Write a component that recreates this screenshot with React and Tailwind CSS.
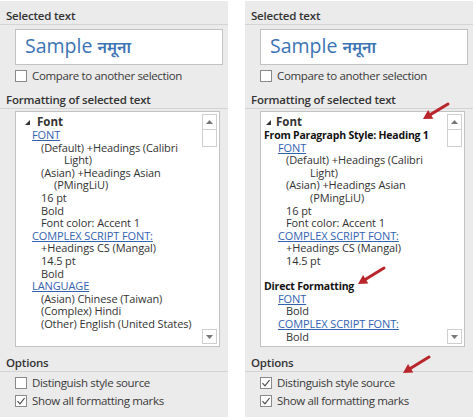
import React from 'react';

const ui = { fontFamily: '"Open Sans", "Noto Sans", "Noto Sans Devanagari", "DejaVu Sans", sans-serif' };

// tree rows: k = kind (head | bold | link | text | blank), x = left offset in box
const leftRows = [
  { k: 'head', t: 'Font' },
  { k: 'link', t: 'FONT', x: 16 },
  { k: 'text', t: '(Default) +Headings (Calibri', x: 25 },
  { k: 'text', t: 'Light)', x: 48 },
  { k: 'text', t: '(Asian) +Headings Asian', x: 25 },
  { k: 'text', t: '(PMingLiU)', x: 38 },
  { k: 'text', t: '16 pt', x: 25 },
  { k: 'text', t: 'Bold', x: 25 },
  { k: 'text', t: 'Font color: Accent 1', x: 25 },
  { k: 'link', t: 'COMPLEX SCRIPT FONT:', x: 16 },
  { k: 'text', t: '+Headings CS (Mangal)', x: 25 },
  { k: 'text', t: '14.5 pt', x: 25 },
  { k: 'text', t: 'Bold', x: 25 },
  { k: 'link', t: 'LANGUAGE', x: 16 },
  { k: 'text', t: '(Asian) Chinese (Taiwan)', x: 25 },
  { k: 'text', t: '(Complex) Hindi', x: 25 },
  { k: 'text', t: '(Other) English (United States)', x: 25 },
];

const rightRows = [
  { k: 'head', t: 'Font' },
  { k: 'bold', t: 'From Paragraph Style: Heading 1', x: 3 },
  { k: 'link', t: 'FONT', x: 17 },
  { k: 'text', t: '(Default) +Headings (Calibri', x: 25 },
  { k: 'text', t: 'Light)', x: 49 },
  { k: 'text', t: '(Asian) +Headings Asian', x: 25 },
  { k: 'text', t: '(PMingLiU)', x: 49 },
  { k: 'text', t: '16 pt', x: 25 },
  { k: 'text', t: 'Font color: Accent 1', x: 25 },
  { k: 'link', t: 'COMPLEX SCRIPT FONT:', x: 17 },
  { k: 'text', t: '+Headings CS (Mangal)', x: 25 },
  { k: 'text', t: '14.5 pt', x: 25 },
  { k: 'blank', t: '' },
  { k: 'bold', t: 'Direct Formatting', x: 3 },
  { k: 'link', t: 'FONT', x: 17 },
  { k: 'text', t: 'Bold', x: 25 },
  { k: 'link', t: 'COMPLEX SCRIPT FONT:', x: 17 },
  { k: 'text', t: 'Bold', x: 25 },
];

function Heading({ children }) {
  return (
    <div className="pl-[6px] border-b border-[#d4d4d4] text-[11.5px] leading-[17px] font-semibold tracking-[-0.2px] text-[#333]">
      {children}
    </div>
  );
}

function Check({ checked, label }) {
  return (
    <div className="flex items-center gap-[5px] pl-[15px] h-[18px]">
      <div className="w-[12px] h-[12px] bg-white border border-[#8a8a8a] flex items-center justify-center">
        {checked && (
          <svg width="10" height="10" viewBox="0 0 10 10">
            <path d="M1.5 5.2 L4 7.8 L8.6 2" fill="none" stroke="#4a4a4a" strokeWidth="1.2" />
          </svg>
        )}
      </div>
      <span className="text-[11.5px] leading-[14px] text-[#3a3a3a] tracking-[-0.35px]">{label}</span>
    </div>
  );
}

function Triangle() {
  return (
    <svg width="5" height="5" viewBox="0 0 5 5" className="inline-block">
      <path d="M5 0 L5 5 L0 5 Z" fill="#333" />
    </svg>
  );
}

function Tree({ rows, headPad, headGap }) {
  return (
    <div className="flex-1 pt-[4px] text-[11px] leading-[12.6px] tracking-[-0.1px] text-[#333]">
      {rows.map((r, i) => {
        if (r.k === 'head')
          return (
            <div key={i} className="flex items-center h-[13px]" style={{ paddingLeft: headPad }}>
              <Triangle />
              <span className="font-bold text-[11.5px] tracking-normal" style={{ marginLeft: headGap }}>{r.t}</span>
            </div>
          );
        if (r.k === 'blank') return <div key={i} className="h-[12.6px]" />;
        return (
          <div
            key={i}
            className={
              r.k === 'link'
                ? 'whitespace-nowrap text-[#3562b0] underline underline-offset-1'
                : r.k === 'bold'
                ? 'whitespace-nowrap font-bold text-[10.5px] tracking-[-0.2px] text-[#111]'
                : 'whitespace-nowrap'
            }
            style={{ paddingLeft: r.x }}
          >
            {r.t}
          </div>
        );
      })}
    </div>
  );
}

function ScrollBar() {
  return (
    <div className="w-[15px] my-[2px] mr-[2px] flex flex-col">
      <div className="h-[16px] border border-[#cfcfcf] flex items-center justify-center">
        <svg width="7" height="4" viewBox="0 0 7 4"><path d="M0 4 L3.5 0 L7 4 Z" fill="#777" /></svg>
      </div>
      <div className="h-[17px] border border-t-0 border-[#cfcfcf]" />
      <div className="flex-1" />
      <div className="h-[15px] border border-[#cfcfcf] flex items-center justify-center">
        <svg width="7" height="4" viewBox="0 0 7 4"><path d="M0 0 L3.5 4 L7 0 Z" fill="#777" /></svg>
      </div>
    </div>
  );
}

function Panel({ rows, headPad, headGap, checks }) {
  return (
    <div className="w-[228px] h-[416px] mt-[1px] bg-[#ebebeb] flex flex-col pt-[6px]">
      <Heading>Selected text</Heading>
      <div className="ml-[15px] mr-[5px] mt-[4px] h-[36px] bg-white border border-[#c2c2c2] flex items-center pl-[9px]">
        <span className="text-[19.5px] text-[#3c74b4] leading-none">
          Sample <span className="text-[16px] font-semibold" style={{ fontFamily: '"Noto Sans Devanagari", "Lohit Devanagari", "FreeSans", sans-serif' }}>नमूना</span>
        </span>
      </div>
      <div className="mt-[2px]">
        <Check label="Compare to another selection" />
      </div>
      <div className="mt-[6px]">
        <Heading>Formatting of selected text</Heading>
      </div>
      <div className="ml-[15px] mr-[8px] mt-[2px] h-[236px] bg-white border border-[#c2c2c2] flex">
        <Tree rows={rows} headPad={headPad} headGap={headGap} />
        <ScrollBar />
      </div>
      <div className="mt-[7px]">
        <Heading>Options</Heading>
      </div>
      <div className="mt-[2px] flex flex-col">
        <Check checked={checks[0]} label="Distinguish style source" />
        <Check checked={checks[1]} label="Show all formatting marks" />
      </div>
    </div>
  );
}

function Arrow({ x1, y1, x2, y2 }) {
  const a = Math.atan2(y2 - y1, x2 - x1);
  const L = 9, W = 5;
  const bx = x2 - L * Math.cos(a), by = y2 - L * Math.sin(a);
  const px = -Math.sin(a) * W, py = Math.cos(a) * W;
  return (
    <g>
      <line x1={x1} y1={y1} x2={bx} y2={by} stroke="#b8262c" strokeWidth="3" strokeLinecap="round" />
      <path d={`M${x2} ${y2} L${bx + px} ${by + py} L${bx - px} ${by - py} Z`} fill="#b8262c" />
    </g>
  );
}

export default function App() {
  return (
    <div className="relative w-[474px] h-[420px] bg-white" style={ui}>
      <div className="flex gap-[17px]">
        <Panel rows={leftRows} headPad={9} headGap={7} checks={[false, true]} />
        <Panel rows={rightRows} headPad={5} headGap={5} checks={[true, true]} />
      </div>
      <svg className="absolute inset-0 pointer-events-none" width="474" height="420">
        <Arrow x1={448} y1={104} x2={423} y2={119} />
        <Arrow x1={384} y1={268} x2={358} y2={284} />
        <Arrow x1={429} y1={357} x2={403} y2={373} />
      </svg>
    </div>
  );
}
